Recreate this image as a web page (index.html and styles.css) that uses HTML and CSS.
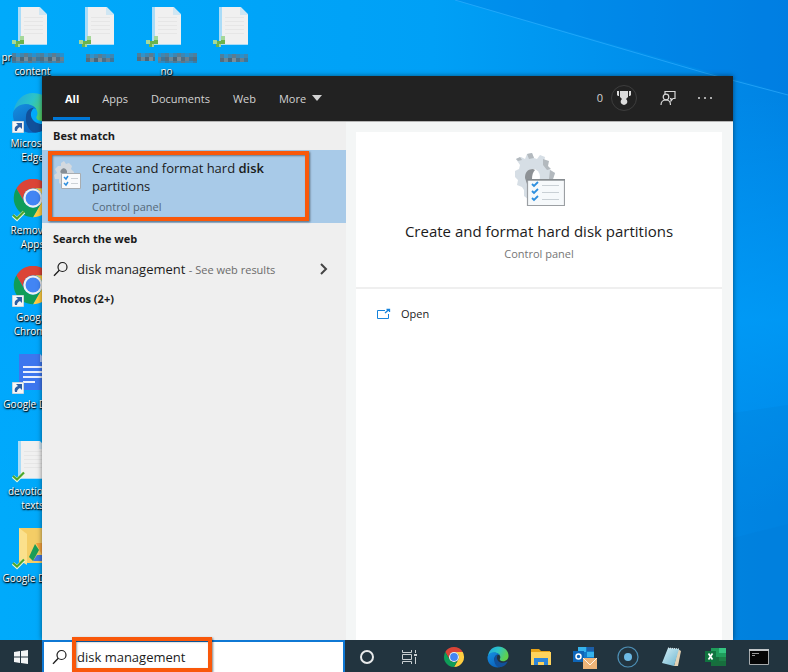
FILE: index.html
```html
<!DOCTYPE html>
<html lang="en">
<head>
<meta charset="utf-8">
<title>Desktop search</title>
<link rel="stylesheet" href="styles.css">
</head>
<body>
<svg class="defs" width="0" height="0" aria-hidden="true">
  <defs>
    <linearGradient id="edge-top" x1="0" y1="0" x2="1" y2="0.4">
      <stop offset="0" stop-color="#1fa6e0"/><stop offset="0.5" stop-color="#2cc3c9"/><stop offset="1" stop-color="#5fd04c"/>
    </linearGradient>
    <linearGradient id="edge-left" x1="0" y1="0" x2="0.6" y2="1">
      <stop offset="0" stop-color="#1590e0"/><stop offset="1" stop-color="#0b62bd"/>
    </linearGradient>
    <linearGradient id="note-fill" x1="0" y1="0" x2="1" y2="1">
      <stop offset="0" stop-color="#d6f0f7"/><stop offset="1" stop-color="#6bb4cf"/>
    </linearGradient>
    <pattern id="mosaic" width="28" height="12" patternUnits="userSpaceOnUse">
      <rect width="28" height="12" fill="#3f86b0"/>
      <rect x="0" y="0" width="4" height="4" fill="#4f7f9b"/><rect x="4" y="0" width="4" height="4" fill="#2f93cc"/><rect x="12" y="0" width="4" height="4" fill="#5b7c90"/><rect x="20" y="0" width="4" height="4" fill="#2790ce"/>
      <rect x="0" y="4" width="4" height="4" fill="#546d7f"/><rect x="4" y="4" width="4" height="4" fill="#6b8797"/><rect x="8" y="4" width="4" height="4" fill="#4a6679"/><rect x="12" y="4" width="4" height="4" fill="#7b8d99"/><rect x="16" y="4" width="4" height="4" fill="#4d6f86"/><rect x="20" y="4" width="4" height="4" fill="#697f8e"/><rect x="24" y="4" width="4" height="4" fill="#3d769a"/>
      <rect x="0" y="8" width="4" height="4" fill="#3b7ca3"/><rect x="8" y="8" width="4" height="4" fill="#56788d"/><rect x="16" y="8" width="4" height="4" fill="#647684"/><rect x="24" y="8" width="4" height="4" fill="#2c8ac3"/>
    </pattern>
    <symbol id="chrome" viewBox="0 0 48 48">
      <path fill="#db4437" d="M24 13H43.05A22 22 0 0 0 4.95 13L14.47 29.5A11 11 0 0 1 24 13z"/>
      <path fill="#ffcd40" transform="rotate(120 24 24)" d="M24 13H43.05A22 22 0 0 0 4.95 13L14.47 29.5A11 11 0 0 1 24 13z"/>
      <path fill="#0f9d58" transform="rotate(240 24 24)" d="M24 13H43.05A22 22 0 0 0 4.95 13L14.47 29.5A11 11 0 0 1 24 13z"/>
      <circle cx="24" cy="24" r="11" fill="#f1f1f1"/><circle cx="24" cy="24" r="8.5" fill="#4285f4"/>
    </symbol>
    <symbol id="edge" viewBox="0 0 48 48">
      <path fill="url(#edge-top)" d="M2 22C4 9 13 1 24 1C38 1 47 11 47 21C47 28 42 33 35 33C30 33 27 31 28 28C31 24 28 17 21 15C13 13 5 17 2 22z"/>
      <path fill="url(#edge-left)" d="M1 25C2 16 14 11 22 15C25 16 27 18 28 20C24 17 17 20 16 28C16 36 23 43 35 43C22 52 1 44 1 25z"/>
      <path fill="#11509a" d="M16 28C16 22 20 18 25 18C21 22 20 28 25 33C31 38 39 37 44 34C45 34 45 35 44 36C40 43 33 47 24 46C18 42 15 35 16 28z"/>
    </symbol>
    <symbol id="page" viewBox="0 0 44 44">
      <path fill="#a9dcf8" d="M7 1H29L36 8V39H7z"/>
      <path fill="#f0f0f0" d="M10 1H28L36 9V38H10z"/>
      <path fill="#cfe6f3" d="M28 1V9H36z"/>
      <path stroke="#e6e6e6" d="M13 11.500H32M13 15.500H32M13 19.500H32M13 23.500H32M13 27.500H32"/>
    </symbol>
    <symbol id="synced" viewBox="0 0 44 44">
      <path fill="none" stroke="#eaf7df" stroke-width="3.500" d="M2 36.500L6 40L13 33"/>
      <path fill="none" stroke="#4ea72c" stroke-width="2.200" d="M2 36L6 39.500L13 32.500"/>
    </symbol>
    <symbol id="synced-blocks" viewBox="0 0 44 44">
      <path fill="#a5d89a" d="M1 34H5V38H1zM5 38H9V41H5zM9 30H13V34H9z"/>
      <path fill="#6bb34d" d="M5 35H9V38H5zM9 34H13V38H9zM4 38H7V41H4z"/>
    </symbol>
    <symbol id="shortcut" viewBox="0 0 44 44">
      <path fill="#f6f6f6" stroke="#c9d6de" d="M1.500 29.500H12.500V40.500H1.500z"/>
      <path fill="#2d5fa4" d="M5 31H11V37L9 35C7 36 6 37 6 39L4 39C3 36 4 34 7 33z"/>
    </symbol>
    <symbol id="magnifier" viewBox="0 0 16 16">
      <circle cx="9.500" cy="6" r="4.500" fill="none" stroke="currentColor" stroke-width="1.200"/>
      <path d="M6.300 9.200L1 14.800" stroke="currentColor" stroke-width="1.300"/>
    </symbol>
    <symbol id="gear" viewBox="-2 0 52 54">
      <path fill="#d6dee5" d="M1 6L6 4L10 6L12 1L17 0L19 5L22 6L25 2L30 4L29 9L32 13L34 16L40 20L38 26H30V27H13V46L9 43L9 37L7 34L2 32L3 27L0 24L0 18L4 16L5 12z"/>
      <path fill="#b3b9be" d="M12 1L17 0L19 5L14 6zM28 6L34 8L33 13L36 16L32 17L28 12zM35 17L40 20L38 26H34zM1 6L5 4L7 7L3 8z"/>
      <ellipse cx="18" cy="24" rx="7" ry="8" fill="#fff"/>
      <path fill="#8d9195" d="M18 16C12 16 10 20 10 25L12 31L13 26H17C17 22 18 19 20 17z"/>
      <path fill="#f6f9fb" stroke="#9b9fa3" stroke-width="1.200" d="M12.500 27H49.500V52.500H12.500z"/>
      <path fill="#868b8f" d="M12 26H50V27.500H12z"/>
      <path fill="none" stroke="#2d8fdf" stroke-width="1.800" d="M17 31L19 33L23 29M17 38L19 40L23 36M17 45L19 47L23 43"/>
      <path stroke="#c9d0d5" d="M27 32.500H44M27 39.500H44M27 46.500H44"/>
    </symbol>
    <symbol id="gear-small" viewBox="0 0 28 29">
      <path fill="#d3d9df" d="M7 2L10 0L12 3L15 2L18 5L17 8L20 11V15H8V24L5 22L5 18L1 18L0 14L3 12L1 8L4 5L7 5z"/>
      <path fill="#858d94" d="M7 9C9 6 12 7 13 10V13H8C6 12 6 10 7 9z"/>
      <path fill="#f9fafb" stroke="#a8adb1" d="M7.500 12.500H26.500V27.500H7.500z"/>
      <path fill="none" stroke="#2d8fdf" stroke-width="1.500" d="M10 16L12 18L14 15M10 22L12 24L14 21"/>
      <path stroke="#cdd2d6" d="M17 17.500H24M17 22.500H24"/>
    </symbol>
  </defs>
</svg>

<main class="desktop">
  <svg class="wallpaper" viewBox="0 0 788 640" preserveAspectRatio="none" aria-hidden="true">
    <path fill="#0074df" fill-opacity="0.300" d="M455 0L788 94V0z"/>
    <path stroke="#35b0ff" stroke-opacity="0.600" d="M455 0L705 73L788 95" fill="none"/>
    <path fill="#007fd8" fill-opacity="0.250" d="M733 413L788 405V640H733z"/>
    <path fill="#007ad0" fill-opacity="0.200" d="M733 538L788 524V640H733z"/>
  </svg>

  <ul class="icons icons-row">
    <li class="icon"><svg class="glyph"><use href="#page"/><use href="#synced-blocks"/></svg><span>pr<svg class="mosaic" width="52" height="10"><rect width="52" height="10" fill="url(#mosaic)"/></svg></span><span>content</span></li>
    <li class="icon"><svg class="glyph"><use href="#page"/><use href="#synced-blocks"/></svg><span><svg class="mosaic" width="28" height="8"><rect width="28" height="8" fill="url(#mosaic)"/></svg></span></li>
    <li class="icon"><svg class="glyph"><use href="#page"/><use href="#synced-blocks"/></svg><span><svg class="mosaic" width="60" height="10"><rect width="18" height="8" fill="url(#mosaic)"/><rect x="21" width="39" height="10" fill="url(#mosaic)"/></svg></span><span>no</span></li>
    <li class="icon"><svg class="glyph"><use href="#page"/><use href="#synced-blocks"/></svg><span><svg class="mosaic" width="28" height="8"><rect width="28" height="8" fill="url(#mosaic)"/></svg></span></li>
  </ul>
  <ul class="icons icons-column">
    <li class="icon"><svg class="glyph"><use href="#edge" x="1" width="42" height="42"/><use href="#shortcut"/></svg><span>Microsoft</span><span>Edge</span></li>
    <li class="icon"><svg class="glyph"><use href="#chrome" x="1" y="-2" width="42" height="42"/><use href="#synced"/></svg><span>Removed</span><span>Apps</span></li>
    <li class="icon"><svg class="glyph"><use href="#chrome" x="1" y="-2" width="42" height="42"/><use href="#shortcut"/></svg><span>Google</span><span>Chrome</span></li>
    <li class="icon"><svg class="glyph" viewBox="0 0 44 44"><path fill="#3d76ee" d="M8 1H29L37 9V37H8z"/><path fill="#a9c5fb" d="M29 1V9H37z"/><path stroke="#e8effd" stroke-width="2" d="M12 14H32M12 19H32M12 24H32M12 29H24"/><use href="#shortcut"/></svg><span>Google Docs</span></li>
    <li class="icon"><svg class="glyph"><use href="#page"/><use href="#synced"/></svg><span>devotional</span><span>texts</span></li>
    <li class="icon"><svg class="glyph" viewBox="0 0 44 44"><path fill="#f4cd66" d="M8 1H34V36H8z"/><path fill="#fbe08c" d="M8 1L16 7V38L8 33z"/><path fill="#1a9d58" d="M18 30L24 17L28 23L22 34z"/><path fill="#4178e0" d="M22 34L26 28H38V34z"/><path fill="#f5a33c" d="M25 16H31L38 28H31z"/><use href="#synced"/></svg><span>Google Drive</span></li>
  </ul>

  <section class="search" aria-label="Search">
    <header class="bar">
      <nav class="tabs">
        <button class="tab current">All</button>
        <button class="tab">Apps</button>
        <button class="tab">Documents</button>
        <button class="tab">Web</button>
        <button class="tab">More <svg width="10" height="6" viewBox="0 0 10 6" aria-hidden="true"><path fill="currentColor" d="M0 0H10L5 6z"/></svg></button>
      </nav>
      <div class="tools">
        <span>0</span>
        <button class="tool rewards" aria-label="Rewards"><svg width="16" height="16" viewBox="0 0 16 16"><path fill="#dcdcdc" d="M4 1H12V7L10 9A3.300 3.300 0 1 1 6 9L4 7zM1 1H3V6H2L1 5zM13 1H15V5L14 6H13z"/></svg></button>
        <button class="tool feedback" aria-label="Feedback"><svg width="16" height="16" viewBox="0 0 16 16" fill="none" stroke="#d8d8d8" stroke-width="1.200"><path d="M5 4V1.500H15V8.500H13L11 11V8.500H10"/><circle cx="6" cy="7" r="2.800"/><path d="M1 15C1 11.500 3 10 6 10S10.500 11.500 10.500 15"/></svg></button>
        <button class="tool" aria-label="Options"><svg width="16" height="16" viewBox="0 0 16 16" fill="#d8d8d8"><circle cx="2" cy="8" r="1"/><circle cx="8" cy="8" r="1"/><circle cx="14" cy="8" r="1"/></svg></button>
      </div>
    </header>
    <div class="panes">
      <div class="results">
        <h2>Best match</h2>
        <a class="best" href="#open">
          <svg width="28" height="29" aria-hidden="true"><use href="#gear-small"/></svg>
          <span class="best-text">
            <span class="best-title">Create and format hard <b>disk</b> partitions</span>
            <span class="best-kind">Control panel</span>
          </span>
          <span class="marker"></span>
        </a>
        <h2>Search the web</h2>
        <a class="web" href="#web">
          <svg width="16" height="16" aria-hidden="true"><use href="#magnifier"/></svg>
          <span class="query">disk management <small>- See web results</small></span>
          <svg width="8" height="12" viewBox="0 0 8 12" aria-hidden="true"><path fill="none" stroke="#444" stroke-width="2" d="M1 1L6 6L1 11"/></svg>
        </a>
        <h2>Photos (2+)</h2>
      </div>
      <article class="preview">
        <div class="hero">
          <svg width="52" height="54" aria-hidden="true"><use href="#gear"/></svg>
          <h1>Create and format hard disk partitions</h1>
          <p>Control panel</p>
        </div>
        <a class="open" id="open" href="#open">
          <svg width="15" height="12" viewBox="0 0 15 12" fill="none" stroke="#1583dc" aria-hidden="true"><path d="M9 2.500H1.500V10.500H12.500V6"/><path d="M9 5L13 1.500M10.500 1.500H13.500V4" stroke-width="1.300"/></svg>
          Open
        </a>
      </article>
    </div>
  </section>
</main>

<footer class="taskbar">
  <button class="start" aria-label="Start"><svg width="14" height="14" viewBox="0 0 14 14" fill="#f3f5f6"><path d="M0 2L6 1V6.500H0zM7 1L14 0V6.500H7zM0 7.500H6V13L0 12zM7 7.500H14V14L7 13z"/></svg></button>
  <label class="find">
    <svg width="16" height="16" aria-hidden="true"><use href="#magnifier"/></svg>
    <span class="find-field">
      <input type="text" value="disk management" aria-label="Search">
      <span class="marker"></span>
    </span>
  </label>
  <div class="apps">
    <button aria-label="Cortana"><svg width="22" height="22" viewBox="0 0 22 22"><circle cx="11" cy="11" r="6" fill="none" stroke="#e8eaeb" stroke-width="2"/></svg></button>
    <button aria-label="Task view"><svg width="22" height="22" viewBox="0 0 22 22" fill="none" stroke="#c9cfd2"><path d="M3.500 4V6.500H12.500V4M3.500 18V15.500H12.500V18M3.500 8.500H12.500V13.500H3.500zM16.500 4V7M16.500 11V18"/><path d="M15 9H18" stroke-width="2"/></svg></button>
    <button aria-label="Chrome"><svg width="22" height="22"><use href="#chrome"/></svg></button>
    <button aria-label="Edge"><svg width="22" height="22"><use href="#edge"/></svg></button>
    <button aria-label="File Explorer"><svg width="22" height="22" viewBox="0 0 22 22"><path fill="#e8a317" d="M1 3H9L11 5H20V10H1z"/><path fill="#ffd35c" d="M1 6H21V19H1z"/><path fill="#2f86d8" d="M4 19V12H18V19H14V16H8V19z"/></svg></button>
    <button aria-label="Outlook"><svg width="24" height="24" viewBox="0 0 24 24"><path fill="#1279c9" d="M5 2H21V17H5z"/><path fill="#35b2ec" d="M5 2H13V7H5zM14 7H21V12H14z"/><path fill="#1d5fa8" d="M14 2H21V6H14z"/><path fill="#0d65b8" d="M0 6H11V17H0z"/><circle cx="5.500" cy="11.500" r="2.500" fill="none" stroke="#fff" stroke-width="1.500"/><path fill="#eeb478" d="M10 13H24V24H10z"/><path fill="none" stroke="#fff5e8" d="M10 13L17 20L24 13"/></svg></button>
    <button aria-label="Recorder"><svg width="22" height="22" viewBox="0 0 22 22"><circle cx="11" cy="11" r="10" fill="none" stroke="#4d8fb5" stroke-width="1.200"/><circle cx="11" cy="11" r="4" fill="#6cb9e4"/></svg></button>
    <button aria-label="Notepad"><svg width="22" height="22" viewBox="0 0 22 22"><path fill="#e3d2b5" d="M17 3L20 5L17 20L13 20z"/><path fill="url(#note-fill)" d="M7 2L18 3L13 20L1 17z"/><path stroke="#e8f4f8" stroke-dasharray="1 1" d="M7 2L18 3"/></svg></button>
    <button aria-label="Excel"><svg width="22" height="22" viewBox="0 0 22 22"><path fill="#1f9d5b" d="M6 2H21V20H6z"/><path fill="#35c481" d="M14 2H21V7H14z"/><path fill="#176e3d" d="M6 11H21V20H6z"/><path fill="#1c7f47" d="M14 11H21V15H14z"/><path fill="#10743f" d="M0 5H11V16H0z"/><path stroke="#fff" stroke-width="1.700" d="M3.500 7.500L7.500 13.500M7.500 7.500L3.500 13.500"/></svg></button>
    <button aria-label="Command Prompt"><svg width="22" height="22" viewBox="0 0 22 22"><path fill="#050505" stroke="#a7abad" d="M1.500 3.500H20.500V18.500H1.500z"/><path fill="#c3c6c8" d="M1 3H21V5H1z"/><path stroke="#999" d="M4 7.500H11M4 9.500H7"/></svg></button>
  </div>
</footer>
</body>
</html>
```
FILE: styles.css
```css
* {
  box-sizing: border-box;
}

body {
  margin: 0;
  height: 100vh;
  display: flex;
  flex-direction: column;
  overflow: hidden;
  font-family: "Open Sans", "Noto Sans", sans-serif;
  font-size: 11px;
  color: #1b1b1b;
}

button {
  margin: 0;
  padding: 0;
  border: 0;
  background: none;
  font: inherit;
  color: inherit;
}

a {
  color: inherit;
  text-decoration: none;
}

h1,
h2,
p,
ul {
  margin: 0;
  padding: 0;
}

svg {
  flex: none;
}

.defs {
  position: absolute;
}

/* Desktop */

.desktop {
  position: relative;
  flex: 1;
  min-height: 0;
  background:
    linear-gradient(180deg, transparent 15%, rgba(0, 165, 255, 0.6) 50%, transparent 80%),
    linear-gradient(90deg, #00aafb 0%, #00a0f6 55%, #0083e4 100%);
}

.wallpaper {
  position: absolute;
  inset: 0;
  width: 100%;
  height: 100%;
}

.icons {
  position: relative;
  width: 67px;
  margin-left: -1px;
  list-style: none;
}

.icons-row {
  display: flex;
}

.icons-column {
  margin-top: -1px;
}

.icon {
  display: flex;
  flex: none;
  flex-direction: column;
  align-items: center;
  width: 67px;
  height: 87px;
  padding-top: 6px;
  font-size: 10px;
  line-height: 14px;
  color: #fff;
  text-shadow: 0 1px 2px #000, 1px 1px 1px #000;
  white-space: nowrap;
}

.glyph {
  width: 44px;
  height: 44px;
}

.mosaic {
  vertical-align: middle;
}

/* Search window */

.search {
  position: absolute;
  inset: 76px 55px 0 42px;
  display: flex;
  flex-direction: column;
  box-shadow: 0 0 5px rgba(0, 0, 0, 0.5);
}

.bar {
  display: flex;
  justify-content: space-between;
  height: 46px;
  padding: 0 20px 1px 11px;
  border-bottom: 1px solid #b5b5b5;
  background: #222;
  color: #d2d2d2;
}

.tabs {
  display: flex;
}

.tab {
  display: flex;
  align-items: center;
  gap: 6px;
  padding: 3px 11px 0 12px;
  border-bottom: 3px solid transparent;
}

.current {
  border-bottom-color: #0078d7;
  color: #fff;
  font-weight: 700;
}

.tools {
  display: flex;
  align-items: center;
  padding-bottom: 1px;
}

.tool {
  display: flex;
  align-items: center;
  justify-content: center;
}

.rewards {
  width: 26px;
  height: 26px;
  margin-left: 8px;
  border: 1px solid #3d3d3d;
  border-radius: 50%;
}

.feedback {
  margin: 0 21px 0 23px;
}

.panes {
  display: flex;
  flex: 1;
  background: #f4f6f6;
}

.results {
  flex: 0 0 44%;
  background: #efefef;
}

.results h2 {
  padding-left: 11px;
  font-size: 11px;
  font-weight: 700;
  line-height: 31px;
}

.results h2:first-child {
  line-height: 28px;
}

.best {
  position: relative;
  display: flex;
  gap: 10px;
  padding: 9px 60px 7px 12px;
  background: #a8cae8;
}

.best svg {
  margin-top: 2px;
}

.best-text {
  display: flex;
  flex-direction: column;
  gap: 3px;
}

.best-title {
  font-size: 13px;
  line-height: 18px;
}

.best-title b {
  font-weight: 600;
}

.best-kind {
  line-height: 18px;
  color: #55697a;
}

.marker {
  position: absolute;
  border: 4px solid #f9580a;
  box-shadow: 1px 1px 2px rgba(0, 0, 0, 0.5), inset 1px 1px 2px rgba(0, 0, 0, 0.4);
  pointer-events: none;
}

.best .marker {
  inset: 1px 37px 2px 6px;
}

.web {
  display: flex;
  align-items: center;
  gap: 8px;
  height: 29px;
  padding: 0 18px 0 11px;
}

.query {
  flex: 1;
  font-size: 13px;
  white-space: nowrap;
}

.query small {
  font-size: 11px;
  color: #6b6b6b;
}

.preview {
  flex: 1;
  margin: 10px 11px 0 10px;
  background: #fff;
}

.hero {
  display: flex;
  flex-direction: column;
  align-items: center;
  padding: 21px 0 23px;
  border-bottom: 2px solid #efefef;
}

.hero h1 {
  margin-top: 13px;
  font-size: 15px;
  font-weight: 400;
  line-height: 22px;
}

.hero p {
  margin-top: 2px;
  line-height: 20px;
  color: #767676;
}

.open {
  display: flex;
  align-items: center;
  gap: 10px;
  padding: 16px 20px;
  line-height: 18px;
}

/* Taskbar */

.taskbar {
  position: relative;
  display: flex;
  height: 32px;
  background: #22343f;
}

.start {
  display: flex;
  align-items: center;
  justify-content: center;
  width: 42px;
  padding-top: 2px;
}

.find {
  display: flex;
  align-items: center;
  flex: 0 0 303px;
  gap: 4px;
  padding-left: 8px;
  border: 2px solid #0f78d4;
  border-bottom: 0;
  background: #fff;
}

.find-field {
  position: relative;
  flex: 1;
}

.find input {
  width: 100%;
  height: 30px;
  padding: 0 5px;
  border: 0;
  outline: 0;
  background: none;
  font: inherit;
  font-size: 13px;
  color: inherit;
}

.find .marker {
  inset: -5px auto 0 0;
  width: 140px;
}

.apps {
  display: flex;
  flex: 1;
  padding-right: 7px;
}

.apps button {
  display: flex;
  flex: 1;
  align-items: center;
  justify-content: center;
  padding-top: 2px;
}
```
